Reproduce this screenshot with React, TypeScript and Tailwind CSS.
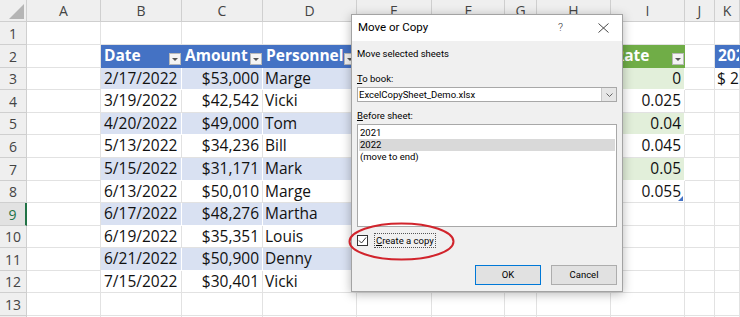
import React from 'react';

const LETTERS = ['', 'A', 'B', 'C', 'D', 'E', 'F', 'G', 'H', 'I', 'J', 'K'];

// rows 3..12 of the blue table
const SALES: [string, string, string][] = [
  ['2/17/2022', '$53,000', 'Marge'],
  ['3/19/2022', '$42,542', 'Vicki'],
  ['4/20/2022', '$49,000', 'Tom'],
  ['5/13/2022', '$34,236', 'Bill'],
  ['5/15/2022', '$31,171', 'Mark'],
  ['6/13/2022', '$50,010', 'Marge'],
  ['6/17/2022', '$48,276', 'Martha'],
  ['6/19/2022', '$35,351', 'Louis'],
  ['6/21/2022', '$50,900', 'Denny'],
  ['7/15/2022', '$30,401', 'Vicki'],
];

const RATES = ['0', '0.025', '0.04', '0.045', '0.05', '0.055'];

// E and F headers sit under the dialog, so they stay blank
const BLUE_HEAD: Record<number, string> = { 2: 'Date', 3: 'Amount', 4: 'Personnel', 5: '', 6: '' };

function FilterButton() {
  return (
    <span className="absolute bottom-[2px] right-0 flex h-[12px] w-[12px] items-center justify-center border border-[#b9b9b9] bg-[#f4f4f4]">
      <span className="h-0 w-0 border-x-[3px] border-t-[3px] border-x-transparent border-t-[#555]" />
    </span>
  );
}

function Cell({ r, c }: { r: number; c: number }) {
  // top-left corner
  if (r === 0 && c === 0) {
    return (
      <div className="border-b border-r border-[#cfcfcf] bg-[#efefef]">
        <svg width="27" height="22">
          <polygon points="24,4 24,19 9,19" fill="#b5b5b5" />
        </svg>
      </div>
    );
  }
  // column headers
  if (r === 0) {
    return (
      <div className="flex items-center justify-center border-b border-r border-[#cfcfcf] bg-[#efefef] text-[14px] text-[#444]">
        {LETTERS[c]}
      </div>
    );
  }
  // row headers
  if (c === 0) {
    if (r === 9) {
      return (
        <div className="flex items-center justify-center border-b border-r-2 border-b-[#cfcfcf] border-r-[#217346] bg-[#e2e2e2] text-[14px] text-[#217346]">
          {r}
        </div>
      );
    }
    return (
      <div className="flex items-center justify-center border-b border-r border-[#cfcfcf] bg-[#efefef] text-[14px] text-[#444]">
        {r < 14 ? r : ''}
      </div>
    );
  }

  const base = 'relative flex items-center overflow-hidden whitespace-nowrap border-b border-r text-[15.5px]';

  // blue table B..F, rows 2..12
  if (c >= 2 && c <= 6 && r >= 2 && r <= 12) {
    if (r === 2) {
      return (
        <div className={`${base} border-[#4472c4] bg-[#4472c4] pl-[3px] font-bold text-white`}>
          {BLUE_HEAD[c]}
          <FilterButton />
        </div>
      );
    }
    const row = SALES[r - 3];
    const band = r % 2 === 1 ? 'bg-[#d9e1f2] border-white' : 'bg-white border-[#e2e2e2]';
    let body: React.ReactNode = null;
    if (c === 2) body = <span className="pl-[3px]">{row[0]}</span>;
    if (c === 3) body = <span className="ml-auto pr-[3px]">{row[1]}</span>;
    if (c === 4) body = <span className="pl-[2px]">{row[2]}</span>;
    return (
      <div className={`${base} ${band} text-[#111]`}>
        {body}
        {c === 6 && r === 12 && <span className="absolute bottom-0 right-0 h-[4px] w-[5px] bg-[#4472c4]" />}
      </div>
    );
  }

  // green table H..I, rows 2..8
  if (c >= 8 && c <= 9 && r >= 2 && r <= 8) {
    if (r === 2) {
      return (
        <div className={`${base} border-[#70ad47] bg-[#70ad47] pl-[3px] font-bold text-white`}>
          {c === 9 ? 'Rate' : ''}
          <FilterButton />
        </div>
      );
    }
    const band = r % 2 === 1 ? 'bg-[#e2efda] border-white' : 'bg-white border-[#e2e2e2]';
    return (
      <div className={`${base} ${band} text-[#111]`}>
        {c === 9 && <span className="ml-auto pr-[3px]">{RATES[r - 3]}</span>}
        {c === 9 && r === 8 && (
          <svg className="absolute bottom-[1px] right-[1px]" width="5" height="5">
            <polygon points="5,0 5,5 0,5" fill="#4472c4" />
          </svg>
        )}
      </div>
    );
  }

  // partial table at K, cut by the window edge
  if (c === 11 && r === 2) {
    return <div className={`${base} border-[#4472c4] bg-[#4472c4] pl-[3px] font-bold text-white`}>202</div>;
  }
  if (c === 11 && r === 3) {
    return <div className={`${base} whitespace-pre border-[#e2e2e2] bg-white pl-[2px] text-[#111]`}>{'$ 2'}</div>;
  }

  return <div className={`${base} border-[#e2e2e2] bg-white`} />;
}

function MoveOrCopyDialog() {
  return (
    <div className="absolute left-[351px] top-[14px] flex h-[278px] w-[272px] flex-col border border-[#a3a3a3] bg-[#f0f0f0] font-['Roboto',sans-serif] text-black shadow-[0_2px_10px_rgba(0,0,0,0.28)]">
      <div className="flex h-[26px] shrink-0 items-center bg-white pl-[6px] text-[11.5px]">
        <span>Move or Copy</span>
        <span className="ml-auto mr-[35px] text-[11px] font-light text-[#333]">?</span>
        <svg className="mr-[13px]" width="11" height="10" viewBox="0 0 11 10">
          <path d="M0.5 0.5 L10.5 9.5 M10.5 0.5 L0.5 9.5" stroke="#333" strokeWidth="0.9" fill="none" />
        </svg>
      </div>

      <div className="flex flex-1 flex-col px-[5px] text-[9.5px] leading-[12px]">
        <div className="mt-[7px] h-[12px]">Move selected sheets</div>
        <div className="mt-[13px] h-[12px]">
          <span className="underline">T</span>o book:
        </div>
        <div className="mt-[2px] flex h-[15px] items-stretch border border-[#a8a8a8] bg-white">
          <span className="flex-1 pl-[1px] leading-[13px]">ExcelCopySheet_Demo.xlsx</span>
          <span className="flex w-[15px] items-center justify-center border-l border-[#c8c8c8] bg-[#e6e6e6]">
            <svg width="7" height="4" viewBox="0 0 7 4">
              <polyline points="0.5,0.5 3.5,3.5 6.5,0.5" stroke="#555" strokeWidth="0.9" fill="none" />
            </svg>
          </span>
        </div>
        <div className="mt-[8px] h-[12px]">
          <span className="underline">B</span>efore sheet:
        </div>
        <div className="mt-[2px] flex h-[103px] flex-col border border-[#a8a8a8] bg-white px-[1px] pt-[2px]">
          <div className="h-[12px] pl-[1px]">2021</div>
          <div className="h-[12px] bg-[#d9d9d9] pl-[1px]">2022</div>
          <div className="h-[12px] pl-[1px]">(move to end)</div>
        </div>
        <div className="mt-[6px] flex h-[15px] items-center">
          <span className="flex h-[11px] w-[11px] items-center justify-center border border-[#333] bg-white">
            <svg width="9" height="9" viewBox="0 0 9 9">
              <polyline points="1,4.5 3.5,7 8,1.5" stroke="#222" strokeWidth="0.9" fill="none" />
            </svg>
          </span>
          <span className="ml-[6px] h-[15px] border border-dotted border-[#555] px-[1px] leading-[13px]">
            <span className="underline">C</span>reate a copy
          </span>
        </div>
        <div className="mt-[17px] flex justify-end gap-[10px]">
          <button className="h-[20px] w-[66px] border border-[#0078d7] bg-[#e1e1e1] text-[9.5px]">OK</button>
          <button className="h-[20px] w-[66px] border border-[#adadad] bg-[#e1e1e1] text-[9.5px]">Cancel</button>
        </div>
      </div>

      <svg className="absolute left-[-5px] top-[206px] overflow-visible" width="110" height="41">
        <ellipse cx="54.5" cy="20.5" rx="52" ry="18" stroke="#d1242c" strokeWidth="2" fill="none" />
      </svg>
    </div>
  );
}

export default function App() {
  const rows = Array.from({ length: 15 }, (_, i) => i);
  const cols = Array.from({ length: 12 }, (_, i) => i);
  return (
    <div className="relative h-[317px] w-[740px] overflow-hidden bg-white font-['Open_Sans',sans-serif]">
      <div className="grid grid-cols-[27px_74px_81px_81px_94px_75px_73px_32px_74px_74px_30px_25px] grid-rows-[22px_23px_23px_22px_23px_22px_23px_23px_22px_23px_22px_23px_22px_23px_20px]">
        {rows.map((r) => cols.map((c) => <Cell key={`${r}-${c}`} r={r} c={c} />))}
      </div>
      <MoveOrCopyDialog />
    </div>
  );
}
